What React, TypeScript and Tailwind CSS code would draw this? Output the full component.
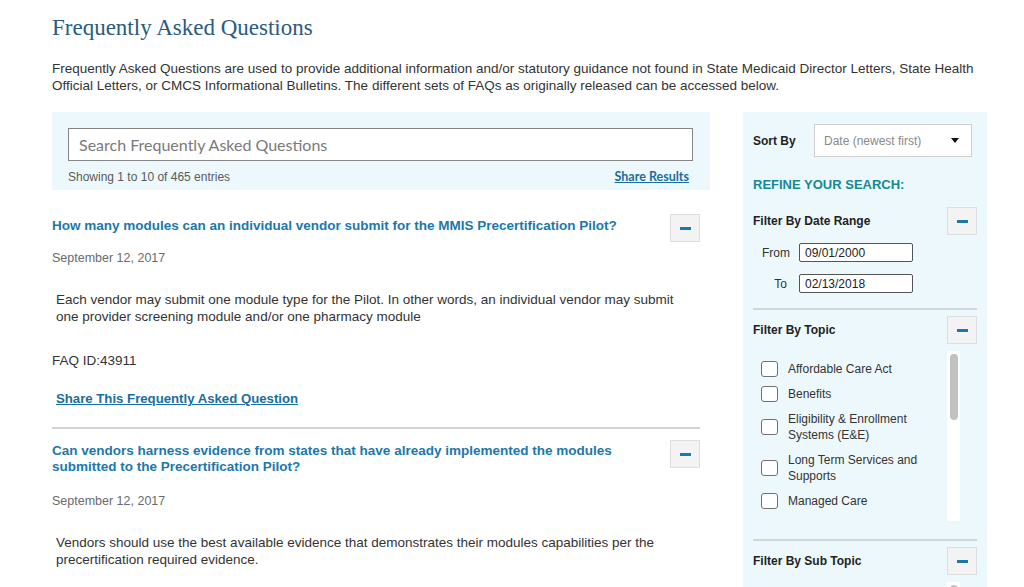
import React from 'react'

const faqs = [
  {
    q: 'How many modules can an individual vendor submit for the MMIS Precertification Pilot?',
    date: 'September 12, 2017',
    a: 'Each vendor may submit one module type for the Pilot. In other words, an individual vendor may submit one provider screening module and/or one pharmacy module',
    id: '43911',
  },
  {
    q: 'Can vendors harness evidence from states that have already implemented the modules submitted to the Precertification Pilot?',
    date: 'September 12, 2017',
    a: 'Vendors should use the best available evidence that demonstrates their modules capabilities per the precertification required evidence.',
    id: '43912',
  },
]

const topics = [
  'Affordable Care Act',
  'Benefits',
  'Eligibility & Enrollment Systems (E&E)',
  'Long Term Services and Supports',
  'Managed Care',
  'Medicaid and CHIP Program',
]

function MinusButton() {
  return (
    <button className="flex h-[28px] w-[30px] shrink-0 items-center justify-center border border-[#dedede] bg-[#f3f3f3]">
      <span className="block h-[3px] w-[11px] bg-[#1a78ab]" />
    </button>
  )
}

function FaqItem({ faq, first }: { faq: typeof faqs[number]; first?: boolean }) {
  return (
    <div className={first ? 'mt-[24px]' : 'mt-[11px]'}>
      <div className="flex items-start justify-between">
        <div className="pr-[40px]">
          <h3 className={`${first ? 'pt-[4px]' : 'pt-[3px]'} text-[13.5px] font-bold leading-[16px] text-[#1b78ab]`}>{faq.q}</h3>
          <p className={`${first ? 'mt-[16px]' : 'mt-[18px]'} text-[12.5px] leading-[16px] text-[#6b6b6b]`}>{faq.date}</p>
        </div>
        <MinusButton />
      </div>
      <p className="mt-[25px] pl-[4px] pr-[20px] text-[13.5px] leading-[17px] text-[#333]">{faq.a}</p>
      {first && (
        <>
          <p className="mt-[28px] text-[13.5px] leading-[16px] text-[#333]">FAQ ID:{faq.id}</p>
          <a href="#" className="mt-[22px] block pl-[4px] text-[13.2px] font-bold leading-[16px] text-[#1a6e9e] underline">
            Share This Frequently Asked Question
          </a>
          <div className="mt-[20px] h-[2px] bg-[#d3d3d3]" />
        </>
      )}
    </div>
  )
}

function ScrollTrack({ thumb }: { thumb: boolean }) {
  return (
    <div className="w-[13px] shrink-0 bg-white pt-[3px]">
      {thumb && <div className="mx-auto h-[66px] w-[8px] rounded-full bg-[#c1c1c1]" />}
    </div>
  )
}

export default function App() {
  return (
    <div className="min-h-screen overflow-hidden bg-white font-['Liberation_Sans',Arial,sans-serif]">
      <div className="w-[987px] pl-[52px]">
        <h1 className="pt-[14px] font-['Liberation_Serif',Georgia,serif] text-[23px] leading-[28px] text-[#2a5b80]">
          Frequently Asked Questions
        </h1>
        <p className="mt-[18px] text-[13.5px] leading-[17px] text-[#333]">
          Frequently Asked Questions are used to provide additional information and/or statutory guidance not found in State Medicaid Director Letters, State Health Official Letters, or CMCS Informational Bulletins. The different sets of FAQs as originally released can be accessed below.
        </p>

        <div className="mt-[18px] flex gap-[33px]">
          {/* main column */}
          <div className="w-[658px]">
            <div className="bg-[#edf8fc] pb-[6px] pl-[16px] pr-[17px] pt-[16px]">
              <div className="flex h-[33px] items-center border border-[#858585] bg-white px-[10px] font-['Lato',sans-serif] text-[16px] text-[#7a7a7a]">
                Search Frequently Asked Questions
              </div>
              <div className="mt-[9px] flex items-center justify-between">
                <span className="text-[12px] leading-[14px] text-[#5a5a5a]">Showing 1 to 10 of 465 entries</span>
                <a href="#" className="pr-[4px] font-['Lato',sans-serif] text-[12.5px] font-bold leading-[14px] text-[#1a6e9e] underline">
                  Share Results
                </a>
              </div>
            </div>
            <div className="mr-[10px]">
              {faqs.map((f, i) => (
                <FaqItem key={f.id} faq={f} first={i === 0} />
              ))}
            </div>
          </div>

          {/* sidebar */}
          <aside className="w-[244px] bg-[#edf8fc] pb-[20px] pl-[10px] pr-[10px] pt-[12px]">
            <div className="flex items-center">
              <span className="w-[61px] text-[12px] font-bold text-[#222]">Sort By</span>
              <div className="flex h-[33px] w-[158px] items-center justify-between border border-[#cfcfcf] bg-white pl-[9px] pr-[12px]">
                <span className="text-[12px] text-[#8a8a8a]">Date (newest first)</span>
                <span className="h-0 w-0 border-l-[4px] border-r-[4px] border-t-[5px] border-l-transparent border-r-transparent border-t-[#111]" />
              </div>
            </div>

            <p className="mt-[20px] text-[13px] font-bold leading-[16px] text-[#158894]">REFINE YOUR SEARCH:</p>

            <div className="mt-[14px] flex items-center justify-between">
              <span className="text-[12px] font-bold text-[#222]">Filter By Date Range</span>
              <MinusButton />
            </div>
            <div className="mt-[8px] flex items-center">
              <span className="w-[46px] pr-[9px] text-right text-[12px] text-[#333]">From</span>
              <div className="flex h-[19px] w-[114px] items-center rounded-[2px] border border-[#555] bg-white pl-[5px] text-[12px] text-[#222]">09/01/2000</div>
            </div>
            <div className="mt-[12px] flex items-center">
              <span className="w-[46px] pr-[12px] text-right text-[12px] text-[#333]">To</span>
              <div className="flex h-[19px] w-[114px] items-center rounded-[2px] border border-[#555] bg-white pl-[5px] text-[12px] text-[#222]">02/13/2018</div>
            </div>

            <div className="mt-[15px] h-[2px] bg-[#d0d6d8]" />

            <div className="mt-[6px] flex items-center justify-between">
              <span className="text-[12px] font-bold text-[#222]">Filter By Topic</span>
              <MinusButton />
            </div>
            <div className="mt-[7px] flex h-[170px]">
              <div className="w-[194px] overflow-hidden pl-[8px] pr-[7px] pt-[10px]">
                <div className="flex flex-col gap-[9px]">
                  {topics.map((t) => (
                    <label key={t} className="flex items-center gap-[10px]">
                      <span className="h-[16px] w-[17px] shrink-0 rounded-[3px] border-[1.5px] border-[#707070] bg-white" />
                      <span className="text-[12px] leading-[16px] text-[#333]">{t}</span>
                    </label>
                  ))}
                </div>
              </div>
              <ScrollTrack thumb />
            </div>

            <div className="mt-[18px] h-[2px] bg-[#d0d6d8]" />

            <div className="mt-[6px] flex items-center justify-between">
              <span className="text-[12px] font-bold text-[#222]">Filter By Sub Topic</span>
              <MinusButton />
            </div>
            <div className="mt-[7px] flex h-[170px] justify-end pr-[17px]">
              <ScrollTrack thumb />
            </div>
          </aside>
        </div>
      </div>
    </div>
  )
}
